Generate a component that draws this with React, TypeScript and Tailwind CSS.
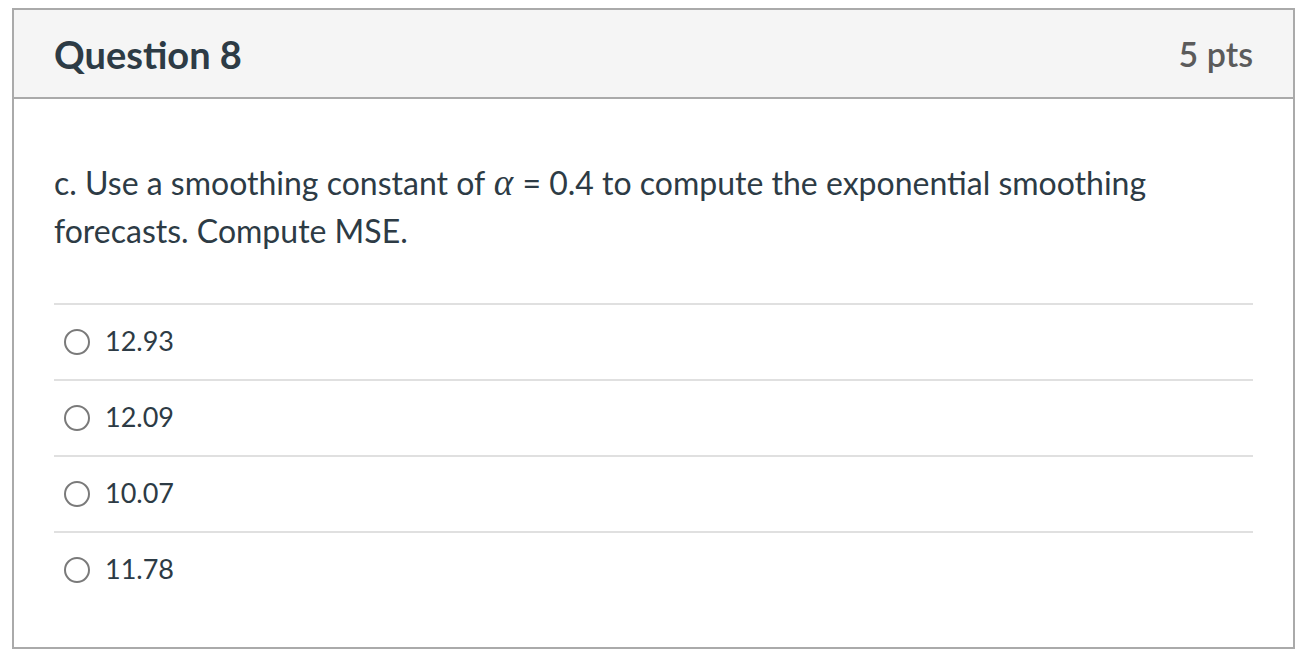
import React from "react";

const options = ["12.93", "12.09", "10.07", "11.78"];

export default function App() {
  return (
    <div className="w-[1314px] h-[666px] bg-white pt-[8px] pl-[12px]" style={{ fontFamily: "Lato, 'Noto Sans', sans-serif" }}>
      <div className="w-[1283px] h-[641px] border-2 border-[#aaaaaa] flex flex-col">
        <div className="h-[89px] bg-[#f5f5f5] border-b-2 border-[#aaaaaa] flex items-center justify-between px-[40px] shrink-0">
          <div className="text-[38px] font-bold text-[#2d3b45] leading-none">Question 8</div>
          <div className="text-[34px] font-semibold text-[#5b5b5b] leading-none">5 pts</div>
        </div>
        <div className="px-[40px] pt-[60px] flex-1">
          <p className="text-[32px] leading-[48px] text-[#2d3b45] mb-[48px]">
            c. Use a smoothing constant of{" "}
            <span className="italic text-[37px] leading-none mx-[1px]" style={{ fontFamily: "'Liberation Serif', serif" }}>α</span> = 0.4 to compute the exponential smoothing forecasts. Compute MSE.
          </p>
          <div>
            {options.map((o) => (
              <div key={o} className="h-[76px] border-t-2 border-[#e0e0e0] flex items-center">
                <div className="ml-[10px] w-[26px] h-[26px] rounded-full border-[2px] border-[#7a7a7a] shrink-0" />
                <div className="ml-[15px] text-[27px] text-[#2d3b45] -mt-[2px]">{o}</div>
              </div>
            ))}
          </div>
        </div>
      </div>
    </div>
  );
}
